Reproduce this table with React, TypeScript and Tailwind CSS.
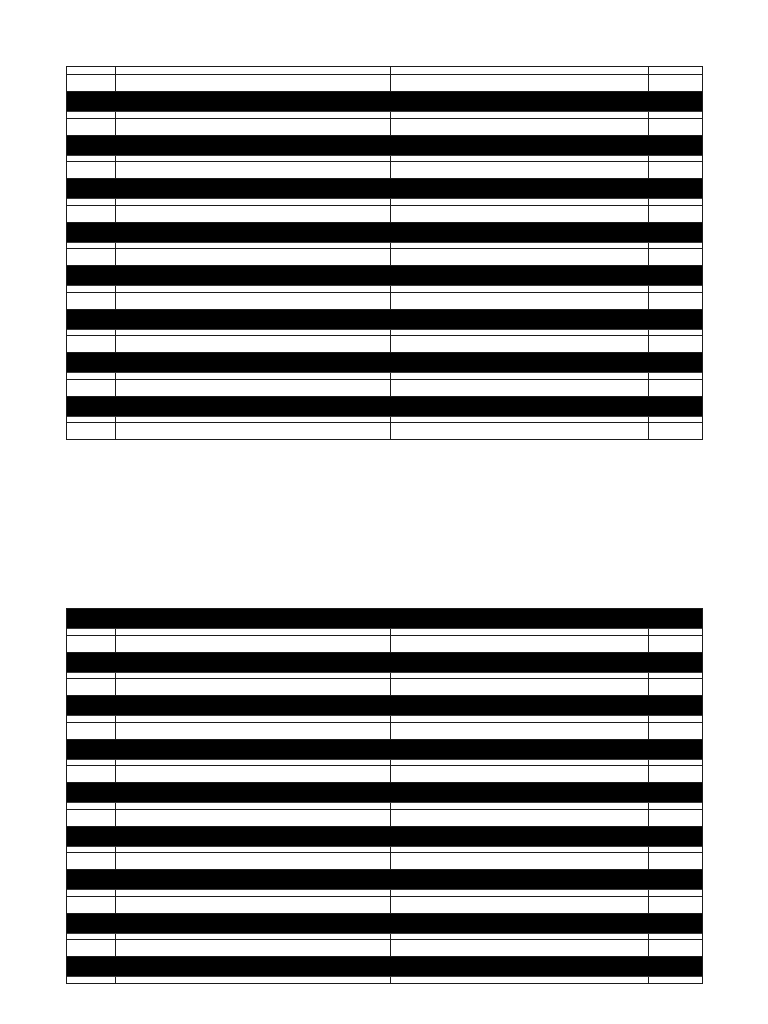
const COLS = [49, 275, 258];

type RowKind = 'thin' | 'white' | 'black';

function Row({ kind, first }: { kind: RowKind; first?: boolean }) {
  if (kind === 'black') {
    return <div className="h-[20px] bg-black border-b border-[#3a3a3a]" />;
  }
  const h = kind === 'thin' ? (first ? 'h-[8px]' : 'h-[6.5px]') : 'h-[17px]';
  return (
    <div className={`flex ${h} border-b border-[#1a1a1a]`}>
      {COLS.map((w, i) => (
        <div key={i} className="h-full border-r border-[#1a1a1a]" style={{ width: w }} />
      ))}
      <div className="flex-1" />
    </div>
  );
}

function Table({ rows }: { rows: RowKind[] }) {
  return (
    <div className="w-[637px] border border-[#1a1a1a] border-b-0 bg-white">
      {rows.map((k, i) => (
        <Row key={i} kind={k} first={i === 0} />
      ))}
    </div>
  );
}

export default function App() {
  const top: RowKind[] = ['thin', 'white'];
  for (let i = 0; i < 8; i++) top.push('black', 'thin', 'white');

  const bottom: RowKind[] = [];
  for (let i = 0; i < 8; i++) bottom.push('black', 'thin', 'white');
  bottom.push('black', 'thin');

  return (
    <div className="w-[768px] h-[1024px] bg-white pt-[66px] pl-[66px] overflow-hidden font-['Liberation_Sans',sans-serif]">
      <div className="flex flex-col gap-[168px]">
        <Table rows={top} />
        <Table rows={bottom} />
      </div>
    </div>
  );
}
